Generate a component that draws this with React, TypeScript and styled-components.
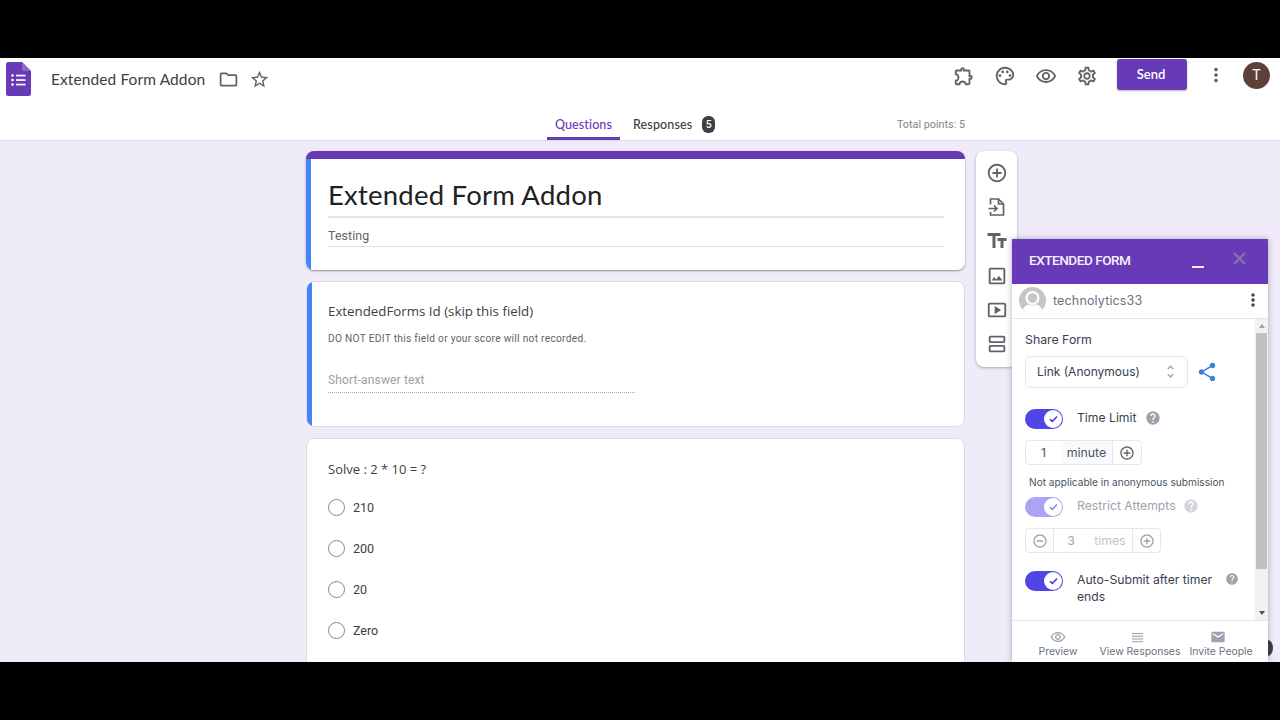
import React from "react";
import styled, { createGlobalStyle } from "styled-components";
import {
  MdOutlineExtension, MdOutlinePalette, MdOutlineRemoveRedEye, MdOutlineSettings, MdMoreVert,
  MdOutlineFolder, MdStarBorder, MdAddCircleOutline, MdTextFields, MdOutlineImage,
  MdOutlineSmartDisplay, MdOutlineViewAgenda, MdHelp, MdShare,
  MdMail, MdRemoveCircleOutline, MdUnfoldMore,
} from "react-icons/md";

const Global = createGlobalStyle`
  html, body { margin: 0; padding: 0; background: #000; }
  * { box-sizing: border-box; }
  body { font-family: Roboto, "Liberation Sans", sans-serif; }
`;

const Page = styled.div`
  width: 1280px; height: 720px; display: flex; flex-direction: column; background: #000; overflow: hidden;
`;
const Letterbox = styled.div`height: 58px; flex: none; background: #000;`;
const Stage = styled.div`
  position: relative; height: 604px; flex: none; overflow: hidden; background: #f0ebf8;
  display: flex; flex-direction: column;
`;
const TopBar = styled.header`
  height: 52px; flex: none; background: #fff; display: flex; align-items: flex-start; padding-left: 6px;
`;
const LogoWrap = styled.div`margin-top: 4px; width: 26px; height: 34px; flex: none;`;
const DocTitle = styled.div`
  margin: 11px 0 0 19px; font: 400 15.5px/21px "Lato", sans-serif; color: #3c4043; letter-spacing: .1px; width: 158px; white-space: nowrap;
`;
const GreyIcon = styled.span<{ $size?: number; $color?: string }>`
  display: inline-flex; font-size: ${p => p.$size ?? 22}px; color: ${p => p.$color ?? "#5f6368"}; flex: none;
`;
const TitleIcons = styled.div`display: flex; align-items: center; gap: 10px; margin: 11px 0 0 9px;`;
const RightGroup = styled.div`
  margin-left: auto; display: flex; align-items: center; height: 34px; padding-right: 10px;
`;
const ActionIcons = styled.div`display: flex; align-items: center; gap: 19px; margin-right: 19px; margin-top: 1px;`;
const SendButton = styled.button`
  width: 70px; height: 31px; margin-top: -2px; border: 0; border-radius: 3px; background: #673ab7; color: #fff;
  font: 600 13px "Lato", sans-serif; box-shadow: 0 1px 2px rgba(0,0,0,.3); padding: 0 2px 1px 0;
`;
const MoreSlot = styled.div`margin: 0 16px 0 18px; display: flex;`;
const Avatar = styled.div`
  width: 27px; height: 27px; border-radius: 50%; background: #5d4037; color: #fff; font-size: 14px;
  display: flex; align-items: center; justify-content: center;
`;
const TabBar = styled.nav`
  height: 31px; flex: none; background: #fff; border-bottom: 1px solid #dadce0; display: flex; padding: 0 315px 0 547px;
`;
const QuestionsTab = styled.div`
  width: 73px; height: 30px; border-bottom: 3px solid #673ab7; color: #673ab7; text-align: center;
  font: 500 12.5px/29px "Lato", sans-serif; letter-spacing: .1px;
`;
const ResponsesTab = styled.div`
  margin-left: 13px; display: flex; align-items: flex-start; gap: 10px; color: #3c4043;
  font: 500 12.5px/29px "Lato", sans-serif; letter-spacing: .13px;
`;
const CountBadge = styled.span`
  margin-top: 6px; width: 13px; height: 17px; border-radius: 6px; background: #3c4043; color: #fff;
  font: 500 10.5px/17px Roboto, sans-serif; text-align: center;
`;
const TotalPoints = styled.div`margin-left: auto; color: #80868b; font: 400 10.8px/29px Roboto, sans-serif;`;
const Content = styled.div`display: flex; align-items: flex-start; gap: 11px; padding: 10px 0 0 306px;`;
const FormColumn = styled.main`width: 659px; flex: none; display: flex; flex-direction: column; gap: 11px;`;
const Card = styled.section`
  background: #fff; border-radius: 8px; border: 1px solid #dadce0;
`;
const TitleCard = styled(Card)`
  height: 119px; border: 0; border-top: 8px solid #673ab7; overflow: hidden; position: relative;
  box-shadow: 0 1px 2px rgba(60,64,67,.55); padding: 18px 21px 0 22px;
  &::before { content: ""; position: absolute; left: 0; top: 0; bottom: 0; width: 5px; background: #4285f4; }
`;
const FormTitle = styled.div`
  height: 41px; border-bottom: 2px solid #e4e4e4; font: 400 27.5px/36px "Lato", sans-serif; color: #202124; letter-spacing: .22px; white-space: nowrap;
`;
const FormDesc = styled.div`
  height: 29px; border-bottom: 1px solid #e0e0e0; font: 400 12.4px/36px Roboto, sans-serif; color: #5f6368; letter-spacing: .1px;
`;
const IdCard = styled(Card)`
  height: 146px; position: relative; overflow: hidden; padding: 20px 0 0 21px;
  &::before { content: ""; position: absolute; left: -1px; top: -1px; bottom: -1px; width: 6px; background: #4285f4; }
`;
const QuestionTitle = styled.div`font: 400 13.3px/18px "Open Sans", sans-serif; color: #3c4043;`;
const HelpText = styled.div`margin-top: 12px; font: 400 10.2px/14px Roboto, sans-serif; color: #5f6368; letter-spacing: .28px;`;
const ShortAnswer = styled.div`
  margin-top: 24px; width: 307px; height: 23px; border-bottom: 1px dotted #aaa; color: #9aa0a6;
  font: 400 12px/20px Roboto, sans-serif; letter-spacing: .15px;
`;
const SolveCard = styled(Card)`height: 260px; padding: 21px 0 0 21px;`;
const SolveTitle = styled(QuestionTitle)`margin-bottom: 9px; font-size: 13px;`;
const Option = styled.div`height: 41px; display: flex; align-items: center; gap: 8px; font: 400 12.5px Roboto, sans-serif; color: #3c4043;`;
const Radio = styled.span`width: 17px; height: 17px; border-radius: 50%; border: 1.5px solid #80868b;`;
const Toolbox = styled.aside`
  width: 41px; height: 216px; flex: none; background: #fff; border-radius: 8px; padding: 5px 0 6px;
  display: flex; flex-direction: column; align-items: center; justify-content: space-between;
  box-shadow: 0 1px 3px rgba(60,64,67,.4);
`;
const ToolSlot = styled.div`height: 34px; display: flex; align-items: center; justify-content: center;`;

const Panel = styled.aside`
  position: absolute; left: 1012px; top: 181px; width: 256px; height: 423px; background: #fff;
  display: flex; flex-direction: column; box-shadow: 0 0 6px rgba(40,30,90,.35);
`;
const PanelHead = styled.div`
  height: 45px; flex: none; background: #673ab7; color: #f5f1fb; display: flex; align-items: center; padding: 0 17px 3px;
`;
const PanelTitle = styled.div`font: 500 13.6px "Roboto", sans-serif; letter-spacing: -.5px;`;
const MinBar = styled.span`margin-left: auto; width: 12px; height: 2px; background: #f0ecf9; margin-top: 13px;`;
const CloseSlot = styled.span`margin-left: 29px; margin-right: 5px; margin-top: -4px; display: flex;`;
const UserRow = styled.div`
  height: 35px; flex: none; border-bottom: 1px solid #e5e5e5; display: flex; align-items: center; padding: 0 5px 2px 7px;
`;
const UserName = styled.div`margin-left: 7px; font: 400 12.5px "Inter", sans-serif; color: #6b7280; letter-spacing: .15px;`;
const UserMore = styled.span`margin-left: auto; display: flex; font-size: 20px; color: #374151;`;
const PanelMiddle = styled.div`height: 301px; flex: none; display: flex; overflow: hidden;`;
const PanelBody = styled.div`
  flex: 1; padding: 13px 0 0 13px; font-family: "Inter", sans-serif; color: #374151; display: flex; flex-direction: column;
`;
const FieldLabel = styled.div`font-size: 12.3px; line-height: 16px; color: #374151;`;
const SelectRow = styled.div`display: flex; align-items: center; margin-top: 8px; gap: 8px;`;
const SelectBox = styled.div`
  width: 163px; height: 32px; border: 1px solid #e5e7eb; border-radius: 6px; display: flex; align-items: center;
  justify-content: space-between; padding: 0 8px 1px 11px; font-size: 12px; color: #374151;
`;
const ToggleRow = styled.div<{ $mt: number; $dim?: boolean; $top?: boolean }>`
  margin-top: ${p => p.$mt}px; display: flex; align-items: ${p => p.$top ? "flex-start" : "center"}; font-size: 12.2px; line-height: 17px;
  color: ${p => p.$dim ? "#9ca3af" : "#374151"};
`;
const Toggle = styled.span<{ $dim?: boolean }>`
  width: 38px; height: 20px; border-radius: 10px; flex: none; background: ${p => p.$dim ? "#a9a5f3" : "#4f46e5"};
  display: flex; align-items: center; justify-content: flex-end; padding-right: 1px; margin-right: 14px;
`;
const Knob = styled.span`
  width: 18px; height: 18px; border-radius: 50%; background: #fff; display: flex; align-items: center; justify-content: center;
`;
const ToggleText = styled.span<{ $wrap?: boolean }>`
  padding-bottom: ${p => p.$wrap ? 0 : 3}px; width: ${p => p.$wrap ? "140px" : "auto"};
`;
const HelpSlot = styled.span<{ $ml: number; $dim?: boolean; $small?: boolean }>`
  margin-left: ${p => p.$ml}px; display: flex; font-size: ${p => p.$small ? 14 : 16}px; color: ${p => p.$dim ? "#d1d5db" : "#9ca3af"};
  padding-bottom: ${p => p.$small ? 0 : 3}px; margin-top: ${p => p.$small ? 1 : 0}px;
`;
const Stepper = styled.div<{ $w: number; $mt: number; $dim?: boolean }>`
  width: ${p => p.$w}px; height: 25px; margin-top: ${p => p.$mt}px; border: 1px solid #e5e7eb; border-radius: 4px; display: flex;
  align-items: center; font-size: 12.3px; color: ${p => p.$dim ? "#9ca3af" : "#4b5563"};
`;
const StepCell = styled.span<{ $w: number; $line?: boolean; $shade?: boolean; $muted?: boolean }>`
  width: ${p => p.$w}px; height: 100%; display: flex; align-items: center; justify-content: center; flex: none;
  border-right: ${p => p.$line ? "1px solid #e5e7eb" : "0"}; background: ${p => p.$shade ? "#f9fafb" : "transparent"};
  color: ${p => p.$muted ? "#c2c6cc" : "inherit"};
`;
const Note = styled.div`margin: 11px 0 0 4px; font-size: 10.15px; line-height: 13px; color: #4b5563; white-space: nowrap;`;
const ScrollTrack = styled.div`
  width: 13px; flex: none; background: #f1f1f1; display: flex; flex-direction: column; align-items: center; padding: 5px 0 5px;
`;
const Arrow = styled.span<{ $up?: boolean; $dark?: boolean }>`
  width: 0; height: 0; border-left: 3.5px solid transparent; border-right: 3.5px solid transparent;
  ${p => p.$up ? `border-bottom: 4px solid ${p.$dark ? "#505050" : "#a0a0a0"};` : `border-top: 4px solid ${p.$dark ? "#505050" : "#a0a0a0"};`}
`;
const Thumb = styled.div`width: 11px; height: 236px; background: #c1c1c1; margin: 5px 0 auto;`;
const PanelFoot = styled.div`
  height: 42px; flex: none; border-top: 1px solid #e8e8e8; display: grid; grid-template-columns: 92px 72px 90px; padding-top: 9px;
`;
const FootItem = styled.div`
  display: flex; flex-direction: column; align-items: center; font: 400 10.4px/13px "Inter", sans-serif; color: #6b7280; white-space: nowrap;
`;
const FootIcon = styled.span<{ $shift?: number }>`
  height: 14px; font-size: 16px; display: flex; align-items: center; color: #9ca3af; margin: 0 ${p => p.$shift ?? 0}px 1px 0;
`;
const HiddenHelp = styled.span`
  position: absolute; left: 1262px; top: 582px; width: 11px; height: 16px; border-radius: 50%; background: #3c4043; z-index: 0;
`;
const PanelLayer = styled.div`position: absolute; inset: 0; pointer-events: none;`;

function FormsLogo() {
  return (
    <svg width="25" height="34" viewBox="0 0 25 34">
      <path d="M2.500 0H16l9 9v22.500a2.500 2.500 0 0 1-2.500 2.500h-20A2.500 2.500 0 0 1 0 31.500v-29A2.500 2.500 0 0 1 2.500 0z" fill="#673ab7" />
      <path d="M16 0l9 9h-7a2 2 0 0 1-2-2z" fill="#8e6bcb" />
      <g fill="#fff">
        <circle cx="6.500" cy="13.500" r="1.300" /><circle cx="6.500" cy="18" r="1.300" /><circle cx="6.500" cy="22.500" r="1.300" />
        <rect x="10" y="12.700" width="9.500" height="1.700" /><rect x="10" y="17.200" width="9.500" height="1.700" /><rect x="10" y="21.700" width="9.500" height="1.700" />
      </g>
    </svg>
  );
}
function ImportIcon() {
  return (
    <svg width="22" height="22" viewBox="0 0 22 22" fill="none" stroke="#5f6368" strokeWidth="1.700">
      <path d="M4.500 8.500V3h8l5 5v11h-13v-3" />
      <path d="M12.500 3v5h5" />
      <path d="M2.500 12.500h8.500M8 9.500l3 3-3 3" />
    </svg>
  );
}
function UserAvatar() {
  return (
    <svg width="27" height="27" viewBox="0 0 27 27">
      <defs><clipPath id="avatarClip"><circle cx="13.500" cy="13.500" r="13.500" /></clipPath></defs>
      <g clipPath="url(#avatarClip)">
        <rect width="27" height="27" fill="#c6c6c6" />
        <circle cx="13.500" cy="11" r="7" fill="#fff" />
        <circle cx="13.500" cy="11" r="4.800" fill="#c6c6c6" />
        <path d="M3 27c0-6 4-9 7-9.500 2 1.300 5 1.300 7 0 3 .5 7 3.500 7 9.500z" fill="#fff" />
      </g>
    </svg>
  );
}
function ListLines() {
  return (
    <svg width="11" height="11" viewBox="0 0 11 11" fill="#9ca3af">
      <rect y="1" width="11" height="1.100" /><rect y="3.700" width="11" height="1.100" />
      <rect y="6.400" width="11" height="1.100" /><rect y="9.100" width="11" height="1.100" />
    </svg>
  );
}
function CloseMark() {
  return (
    <svg width="13" height="13" viewBox="0 0 13 13" stroke="#8671a8" strokeWidth="2.400" fill="none">
      <path d="M1 1l11 11M12 1L1 12" />
    </svg>
  );
}
function CheckMark({ dim }: { dim?: boolean }) {
  return (
    <svg width="9" height="8" viewBox="0 0 9 8" fill="none" stroke={dim ? "#8580e8" : "#3f37c9"} strokeWidth="1.500">
      <path d="M1 4.200l2.300 2.200L8 1.500" />
    </svg>
  );
}
function Switch({ dim }: { dim?: boolean }) {
  return <Toggle $dim={dim}><Knob><CheckMark dim={dim} /></Knob></Toggle>;
}

export default function App() {
  return (
    <Page>
      <Global />
      <Letterbox />
      <Stage>
        <TopBar>
          <LogoWrap><FormsLogo /></LogoWrap>
          <DocTitle>Extended Form Addon</DocTitle>
          <TitleIcons>
            <GreyIcon $size={21}><MdOutlineFolder /></GreyIcon>
            <GreyIcon $size={21}><MdStarBorder /></GreyIcon>
          </TitleIcons>
          <RightGroup>
            <ActionIcons>
              <GreyIcon><MdOutlineExtension /></GreyIcon>
              <GreyIcon><MdOutlinePalette /></GreyIcon>
              <GreyIcon><MdOutlineRemoveRedEye /></GreyIcon>
              <GreyIcon><MdOutlineSettings /></GreyIcon>
            </ActionIcons>
            <SendButton>Send</SendButton>
            <MoreSlot><GreyIcon $size={22}><MdMoreVert /></GreyIcon></MoreSlot>
            <Avatar>T</Avatar>
          </RightGroup>
        </TopBar>
        <TabBar>
          <QuestionsTab>Questions</QuestionsTab>
          <ResponsesTab>Responses<CountBadge>5</CountBadge></ResponsesTab>
          <TotalPoints>Total points: 5</TotalPoints>
        </TabBar>
        <Content>
          <FormColumn>
            <TitleCard>
              <FormTitle>Extended Form Addon</FormTitle>
              <FormDesc>Testing</FormDesc>
            </TitleCard>
            <IdCard>
              <QuestionTitle>ExtendedForms Id (skip this field)</QuestionTitle>
              <HelpText>DO NOT EDIT this field or your score will not recorded.</HelpText>
              <ShortAnswer>Short-answer text</ShortAnswer>
            </IdCard>
            <SolveCard>
              <SolveTitle>Solve : 2 * 10 = ?</SolveTitle>
              {["210", "200", "20", "Zero"].map(o => <Option key={o}><Radio />{o}</Option>)}
            </SolveCard>
          </FormColumn>
          <Toolbox>
            <ToolSlot><GreyIcon><MdAddCircleOutline /></GreyIcon></ToolSlot>
            <ToolSlot><ImportIcon /></ToolSlot>
            <ToolSlot><GreyIcon $size={24}><MdTextFields /></GreyIcon></ToolSlot>
            <ToolSlot><GreyIcon><MdOutlineImage /></GreyIcon></ToolSlot>
            <ToolSlot><GreyIcon><MdOutlineSmartDisplay /></GreyIcon></ToolSlot>
            <ToolSlot><GreyIcon><MdOutlineViewAgenda /></GreyIcon></ToolSlot>
          </Toolbox>
        </Content>
        <PanelLayer>
          <HiddenHelp />
          <Panel>
            <PanelHead>
              <PanelTitle>EXTENDED FORM</PanelTitle>
              <MinBar />
              <CloseSlot><CloseMark /></CloseSlot>
            </PanelHead>
            <UserRow>
              <UserAvatar />
              <UserName>technolytics33</UserName>
              <UserMore><MdMoreVert /></UserMore>
            </UserRow>
            <PanelMiddle>
              <PanelBody>
                <FieldLabel>Share Form</FieldLabel>
                <SelectRow>
                  <SelectBox>Link (Anonymous)<GreyIcon $size={17} $color="#9ca3af"><MdUnfoldMore /></GreyIcon></SelectBox>
                  <GreyIcon $size={22} $color="#3b7de0"><MdShare /></GreyIcon>
                </SelectRow>
                <ToggleRow $mt={21}>
                  <Switch /><ToggleText>Time Limit</ToggleText><HelpSlot $ml={8}><MdHelp /></HelpSlot>
                </ToggleRow>
                <Stepper $w={117} $mt={11}>
                  <StepCell $w={35}>1</StepCell>
                  <StepCell $w={52} $line $shade>minute</StepCell>
                  <StepCell $w={28}><GreyIcon $size={16}><MdAddCircleOutline /></GreyIcon></StepCell>
                </Stepper>
                <Note>Not applicable in anonymous submission</Note>
                <ToggleRow $mt={8} $dim>
                  <Switch dim /><ToggleText>Restrict Attempts</ToggleText><HelpSlot $ml={7} $dim><MdHelp /></HelpSlot>
                </ToggleRow>
                <Stepper $w={136} $mt={11} $dim>
                  <StepCell $w={28} $line><GreyIcon $size={16} $color="#a0a5ad"><MdRemoveCircleOutline /></GreyIcon></StepCell>
                  <StepCell $w={34}>3</StepCell>
                  <StepCell $w={45} $line $muted>times</StepCell>
                  <StepCell $w={27}><GreyIcon $size={16} $color="#a0a5ad"><MdAddCircleOutline /></GreyIcon></StepCell>
                </Stepper>
                <ToggleRow $mt={18} $top>
                  <Switch /><ToggleText $wrap>Auto-Submit after timer ends</ToggleText>
                  <HelpSlot $ml={8} $small><MdHelp /></HelpSlot>
                </ToggleRow>
              </PanelBody>
              <ScrollTrack>
                <Arrow $up />
                <Thumb />
                <Arrow $dark />
              </ScrollTrack>
            </PanelMiddle>
            <PanelFoot>
              <FootItem><FootIcon><MdOutlineRemoveRedEye /></FootIcon>Preview</FootItem>
              <FootItem><FootIcon $shift={6}><ListLines /></FootIcon>View Responses</FootItem>
              <FootItem><FootIcon $shift={6}><MdMail /></FootIcon>Invite People</FootItem>
            </PanelFoot>
          </Panel>
        </PanelLayer>
      </Stage>
      <Letterbox />
    </Page>
  );
}
